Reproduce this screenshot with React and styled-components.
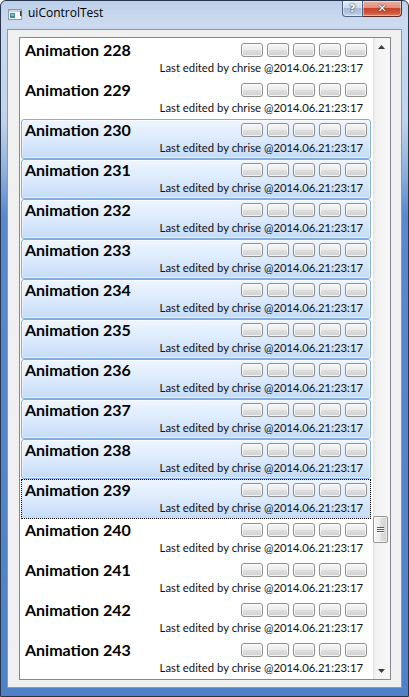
import React from "react";
import styled, { createGlobalStyle } from "styled-components";

const GlobalStyle = createGlobalStyle`
  html, body {
    margin: 0;
    padding: 0;
    overflow: hidden;
    background: #ffffff;
  }
  * {
    box-sizing: border-box;
  }
`;

const Window = styled.div`
  width: 409px;
  height: 697px;
  display: flex;
  flex-direction: column;
  border: 1px solid #27364d;
  border-radius: 6px 6px 0 0;
  padding: 0 6px 8px 6px;
  background: linear-gradient(
    180deg,
    #bcd0e9 0px,
    #cbdaee 20px,
    #c0d3ea 120px,
    #8fb1dd 170px,
    #5889cb 215px,
    #4f81c6 100%
  );
  font-family: "Lato", "Open Sans", sans-serif;
`;

const TitleBar = styled.div`
  height: 28px;
  display: flex;
  align-items: flex-start;
  padding-top: 4px;
`;

const AppIcon = styled.svg`
  width: 15px;
  height: 11px;
  margin: 4px 5px 0 1px;
  flex-shrink: 0;
`;

const Title = styled.div`
  font-family: "Open Sans", "Noto Sans", sans-serif;
  font-size: 12px;
  line-height: 16px;
  color: #000;
`;

const Caption = styled.div`
  margin-left: auto;
  margin-top: -4px;
  display: flex;
`;

const CaptionBtn = styled.div`
  width: ${p => (p.$close ? "39px" : "21px")};
  height: 16px;
  display: flex;
  align-items: center;
  justify-content: center;
  border: 1px solid ${p => (p.$close ? "#5a2b27" : "#4e6384")};
  border-top: none;
  border-left-width: ${p => (p.$close ? "0" : "1px")};
  border-radius: ${p => (p.$close ? "0 0 4px 0" : "0 0 0 4px")};
  background: ${p =>
    p.$close
      ? "linear-gradient(180deg, #eab1a3 0%, #e0907c 45%, #c8442c 50%, #d0553a 80%, #e0806a 100%)"
      : "linear-gradient(180deg, #e4ecf6 0%, #cfdbea 45%, #a7bbd6 50%, #b2c6df 80%, #c9d8ec 100%)"};
  box-shadow: inset 0 0 0 1px rgba(255, 255, 255, 0.45);
  color: #fff;
  font-family: "DejaVu Sans", sans-serif;
  font-weight: bold;
  font-size: 11px;
  text-shadow: 0 0 2px #2a3440, 0 0 1px #2a3440;
`;

const Client = styled.div`
  flex: 1;
  display: flex;
  flex-direction: column;
  background: #f0f0f0;
  border: 1px solid #8799b3;
  padding: 7px 10px 7px 11px;
`;

const ListBox = styled.div`
  flex: 1;
  display: flex;
  border: 1px solid #828790;
  background: #ffffff;
  overflow: hidden;
`;

const Rows = styled.div`
  flex: 1;
  padding-top: 1px;
  display: flex;
  flex-direction: column;
`;

const Row = styled.div`
  height: 40px;
  flex-shrink: 0;
  margin: 0 2px 0 1px;
  padding: 0 3px;
  display: grid;
  grid-template-columns: 1fr auto;
  grid-template-rows: 20px 16px;
  border: 1px ${p => (p.$focus ? "dotted #000000" : p.$selected ? "solid #84acdd" : "solid transparent")};
  border-radius: ${p => (p.$focus ? "0" : "3px")};
  background: ${p =>
    p.$selected
      ? "linear-gradient(180deg, #eef5fe 0%, #dcebfc 50%, #c4daf6 100%)"
      : "transparent"};
  box-shadow: ${p => (p.$selected && !p.$focus ? "inset 0 0 0 1px rgba(255,255,255,0.55)" : "none")};
`;

const ItemTitle = styled.div`
  font-weight: 700;
  font-size: 16px;
  line-height: 20px;
  color: #000;
  white-space: nowrap;
`;

const Buttons = styled.div`
  display: flex;
  gap: 4px;
  margin-top: 3px;
`;

const MiniButton = styled.div`
  width: 22px;
  height: 14px;
  border: 1px solid #8e8e8e;
  border-radius: 3px;
  background: linear-gradient(180deg, #f6f6f6 0%, #ececec 48%, #dddddd 52%, #d2d2d2 100%);
  box-shadow: inset 0 0 0 1px rgba(255, 255, 255, 0.7);
`;

const Edited = styled.div`
  grid-column: 1 / -1;
  text-align: right;
  padding-right: 4px;
  font-size: 11.3px;
  line-height: 16px;
  color: #111;
  white-space: nowrap;
`;

const ScrollBar = styled.div`
  width: 17px;
  display: flex;
  flex-direction: column;
  background: linear-gradient(90deg, #e4e4e4 0px, #f3f3f3 3px, #f6f6f6 100%);
`;

const Arrow = styled.div`
  height: 17px;
  display: flex;
  align-items: center;
  justify-content: center;
`;

const Track = styled.div`
  flex: 1;
`;

const Thumb = styled.div`
  width: 15px;
  height: 27px;
  border: 1px solid #979797;
  border-radius: 2px;
  background: linear-gradient(90deg, #f5f5f5 0%, #ececec 45%, #dcdcdc 55%, #d2d2d2 100%);
  box-shadow: inset 0 0 0 1px rgba(255, 255, 255, 0.6);
  display: flex;
  flex-direction: column;
  align-items: center;
  justify-content: center;
  gap: 1px;
`;

const Grip = styled.div`
  width: 7px;
  height: 1px;
  background: #5a5a5a;
  box-shadow: 0 1px 0 #ffffff;
`;

const items = Array.from({ length: 16 }, (_, i) => 228 + i);

export default function App() {
  return (
    <>
      <GlobalStyle />
      <Window>
        <TitleBar>
          <AppIcon viewBox="0 0 15 11">
            <rect x="0.5" y="0.5" width="13" height="10" fill="#f4f6f8" stroke="#8c98a6" />
            <rect x="1" y="1" width="12" height="2" fill="#c9d3dd" />
            <rect x="2" y="4" width="5" height="5" fill="#3f8c9c" />
            <rect x="3" y="5" width="3" height="2" fill="#7fc0cc" />
            <rect x="12" y="2" width="1.5" height="5" fill="#3a3a3a" />
          </AppIcon>
          <Title>uiControlTest</Title>
          <Caption>
            <CaptionBtn>?</CaptionBtn>
            <CaptionBtn $close>✕</CaptionBtn>
          </Caption>
        </TitleBar>
        <Client>
          <ListBox>
            <Rows>
              {items.map(n => (
                <Row key={n} $selected={n >= 230 && n <= 239} $focus={n === 239}>
                  <ItemTitle>Animation {n}</ItemTitle>
                  <Buttons>
                    {[0, 1, 2, 3, 4].map(b => (
                      <MiniButton key={b} />
                    ))}
                  </Buttons>
                  <Edited>Last edited by chrise @2014.06.21:23:17</Edited>
                </Row>
              ))}
            </Rows>
            <ScrollBar>
              <Arrow>
                <svg width="7" height="4" viewBox="0 0 7 4">
                  <path d="M3.5 0 L7 4 L0 4 Z" fill="#3c3c3c" />
                </svg>
              </Arrow>
              <Track>
                <Thumb style={{ marginTop: 461 }}>
                  <Grip />
                  <Grip />
                  <Grip />
                </Thumb>
              </Track>
              <Arrow>
                <svg width="7" height="4" viewBox="0 0 7 4">
                  <path d="M0 0 L7 0 L3.5 4 Z" fill="#3c3c3c" />
                </svg>
              </Arrow>
            </ScrollBar>
          </ListBox>
        </Client>
      </Window>
    </>
  );
}
